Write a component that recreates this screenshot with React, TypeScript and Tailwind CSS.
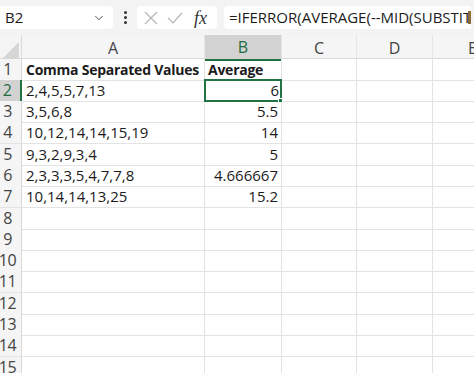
import { ChevronDown } from 'lucide-react';

const rows: { a: string; b: string; bold?: boolean }[] = [
  { a: 'Comma Separated Values', b: 'Average', bold: true },
  { a: '2,4,5,5,7,13', b: '6' },
  { a: '3,5,6,8', b: '5.5' },
  { a: '10,12,14,14,15,19', b: '14' },
  { a: '9,3,2,9,3,4', b: '5' },
  { a: '2,3,3,3,5,4,7,7,8', b: '4.666667' },
  { a: '10,14,14,13,25', b: '15.2' },
];

const cols = ['A', 'B', 'C', 'D'];
const gridCols = 'grid grid-cols-[22px_183px_77px_75px_76px_41px]';

const App = () => {
  const allRows = Array.from({ length: 15 }, (_, i) => rows[i] ?? { a: '', b: '' });

  return (
    <div className="w-[474px] h-[373px] overflow-hidden bg-white font-['Open_Sans',sans-serif] text-[#1b1b1b]">
      {/* Formula bar */}
      <div className="h-[35px] bg-[#f3f3f3] flex items-start pt-[6px]">
        <div className="w-[113px] h-[23px] shrink-0 bg-white rounded-r-[4px] flex items-center justify-between pl-[5px] pr-[7px]">
          <span className="text-[15px]">B2</span>
          <ChevronDown className="w-[14px] h-[14px] text-[#444]" strokeWidth={1.5} />
        </div>
        <div className="w-[24px] h-[23px] shrink-0 flex flex-col items-center justify-center gap-[2px]">
          <span className="w-[3px] h-[3px] rounded-full bg-[#333]" />
          <span className="w-[3px] h-[3px] rounded-full bg-[#333]" />
          <span className="w-[3px] h-[3px] rounded-full bg-[#333]" />
        </div>
        <div className="w-[80px] h-[23px] shrink-0 bg-white rounded-[4px] flex items-center pl-[7px] gap-[9px]">
          <svg width="14" height="14" viewBox="0 0 14 14" className="text-[#b5b5b5]">
            <path d="M1 1 L13 13 M13 1 L1 13" stroke="currentColor" strokeWidth="1.2" fill="none" />
          </svg>
          <svg width="16" height="12" viewBox="0 0 16 12" className="text-[#b5b5b5]">
            <path d="M1 6 L6 11 L15 1" stroke="currentColor" strokeWidth="1.2" fill="none" />
          </svg>
          <span className="font-['Liberation_Serif',serif] italic text-[18px] leading-none text-[#333] ml-[2px]">fx</span>
        </div>
        <div className="ml-[7px] w-[247px] h-[23px] shrink-0 bg-white rounded-l-[4px] flex items-center pl-[5px] overflow-hidden whitespace-nowrap relative">
          <span className="text-[15px]">=IFERROR(AVERAGE(--MID(SUBSTITUTE(</span>
          <span className="absolute right-0 top-[5px] w-[3px] h-[13px] bg-[#8a6a3a]" />
        </div>
      </div>

      {/* Column headers */}
      <div className={`${gridCols} h-[23.5px] bg-[#f5f5f5] border-b border-[#d9d9d9]`}>
        <div className="relative border-r border-[#d9d9d9]">
          <svg width="18" height="17" viewBox="0 0 18 17" className="absolute left-[2px] bottom-[2px]">
            <path d="M17 0 L17 17 L0 17 Z" fill="#d6d6d6" />
          </svg>
        </div>
        {cols.map((c) => (
          <div
            key={c}
            className={`flex items-center justify-center text-[16px] border-r border-[#e6e6e6] ${
              c === 'B'
                ? 'bg-[#d2d2d2] text-[#1e6e42] border-b-2 border-b-[#217346]'
                : 'text-[#444]'
            }`}
          >
            {c}
          </div>
        ))}
        <div className="flex items-center pl-[35px] text-[16px] text-[#444] overflow-hidden">E</div>
      </div>

      {/* Rows */}
      {allRows.map((r, i) => {
        const n = i + 1;
        const active = n === 2;
        return (
          <div key={n} className={`${gridCols} h-[21.3px] text-[15px] leading-[21px]`}>
            <div
              className={`flex items-center justify-center pr-[6px] text-[16px] tracking-[-0.5px] border-b border-[#e3e3e3] ${
                active
                  ? 'bg-[#d2d2d2] text-[#1e6e42] border-r-2 border-r-[#217346]'
                  : 'bg-[#f5f5f5] text-[#444] border-r border-r-[#d9d9d9]'
              }`}
            >
              {n}
            </div>
            <div
              className={`pl-[4px] whitespace-nowrap border-r border-b border-[#e3e3e3] ${
                r.bold ? 'font-bold text-[14px] tracking-[-0.25px]' : ''
              }`}
            >
              {r.a}
            </div>
            {active ? (
              <div className="relative -ml-[1px] -mt-[1px] border-2 border-[#217346] text-right pr-[1px] leading-[19px]">
                {r.b}
                <span className="absolute -right-[3px] -bottom-[3px] w-[5px] h-[5px] bg-[#217346] border border-white" />
              </div>
            ) : (
              <div
                className={`whitespace-nowrap border-r border-b border-[#e3e3e3] ${
                  r.bold ? 'font-bold text-[14px] tracking-[-0.25px] pl-[3px]' : 'text-right pr-[3px]'
                }`}
              >
                {r.b}
              </div>
            )}
            <div className="border-r border-b border-[#e3e3e3]" />
            <div className="border-r border-b border-[#e3e3e3]" />
            <div className="border-b border-[#e3e3e3]" />
          </div>
        );
      })}
    </div>
  );
};

export default App;
